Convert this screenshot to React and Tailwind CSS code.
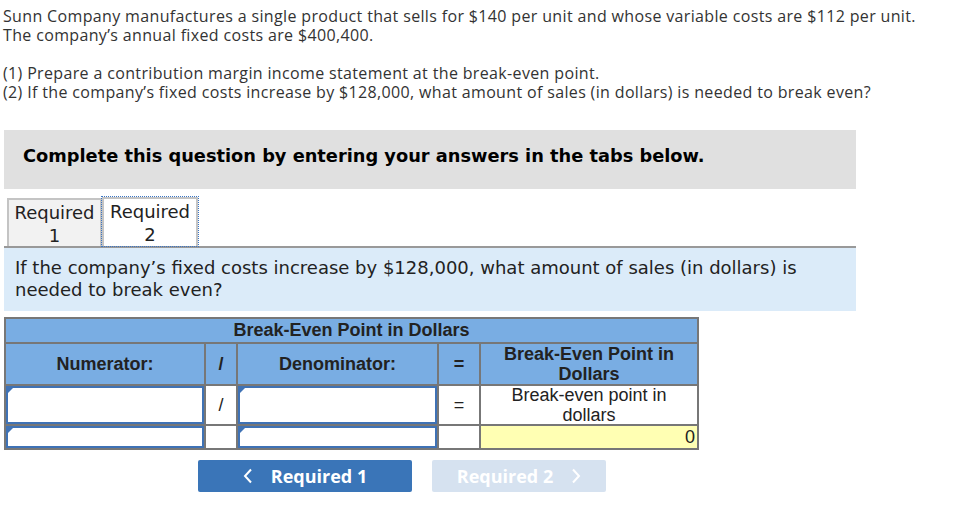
import React from 'react';

const proxima = { fontFamily: '"Open Sans", Lato, sans-serif' };
const verdana = { fontFamily: '"DejaVu Sans", Verdana, sans-serif' };

function InputBox() {
  return (
    <div className="relative h-full w-full bg-white border-2 border-[#3f72b5]">
      <span className="absolute left-0 top-0 w-0 h-0 border-t-[5px] border-r-[5px] border-t-[#3f72b5] border-r-transparent" />
    </div>
  );
}

export default function App() {
  return (
    <div className="w-[980px] h-[516px] bg-white text-[#222] overflow-hidden">
      <div className="pl-[3px] pt-[7px] text-[16px] leading-[19px] tracking-[0.35px] text-[#333]" style={proxima}>
        <p>Sunn Company manufactures a single product that sells for $140 per unit and whose variable costs are $112 per unit.</p>
        <p>The company’s annual fixed costs are $400,400.</p>
        <p className="mt-[19px]">(1) Prepare a contribution margin income statement at the break-even point.</p>
        <p>(2) If the company’s fixed costs increase by $128,000, what amount of sales (in dollars) is needed to break even?</p>
      </div>

      <div className="ml-[4px] mt-[28px] w-[852px] h-[59px] bg-[#e0e0e0] flex items-center pl-[19px] pb-[6px]">
        <span className="font-bold text-[17.8px] text-black" style={verdana}>
          Complete this question by entering your answers in the tabs below.
        </span>
      </div>

      <div className="ml-[4px] mt-[7px] w-[852px]" style={verdana}>
        <div className="flex items-end pl-[3px] h-[52px] border-b-2 border-[#999]">
          <div className="w-[95px] h-[48px] bg-[#f2f2f2] border-2 border-b-0 border-[#c4c4c4] text-center text-[18px] leading-[23px] pt-[1px] text-[#222]">
            Required<br />1
          </div>
          <div className="w-[96px] h-[49px] bg-white border-2 border-b-0 border-[#c4c4c4] outline-1 outline-dotted outline-[#3a75c4] text-center text-[18px] leading-[23px] pt-[1px] text-[#222]">
            Required<br />2
          </div>
        </div>
        <div className="bg-[#dbebf9] h-[63px] pl-[11px] pt-[9px] text-[18px] leading-[22px] text-[#222]">
          If the company’s fixed costs increase by $128,000, what amount of sales (in dollars) is<br />needed to break even?
        </div>
      </div>

      <div
        className="ml-[4px] mt-[6px] w-[695px] bg-[#777] p-[2px] grid gap-[2px] grid-cols-[198px_30px_199px_40px_216px] grid-rows-[23px_40px_38px_22px] text-[18px]"
        style={{ fontFamily: '"Liberation Sans", Arial, sans-serif' }}
      >
        <div className="col-span-5 bg-[#79ade3] font-bold text-[#222] flex items-center justify-center">Break-Even Point in Dollars</div>
        <div className="bg-[#79ade3] font-bold flex items-center justify-center">Numerator:</div>
        <div className="bg-[#79ade3] font-bold flex items-center justify-center">/</div>
        <div className="bg-[#79ade3] font-bold flex items-center justify-center">Denominator:</div>
        <div className="bg-[#79ade3] font-bold flex items-center justify-center">=</div>
        <div className="bg-[#79ade3] font-bold flex items-center justify-center text-center leading-[20px]">Break-Even Point in<br />Dollars</div>

        <div className="bg-white"><InputBox /></div>
        <div className="bg-white flex items-center justify-center">/</div>
        <div className="bg-white"><InputBox /></div>
        <div className="bg-white flex items-center justify-center">=</div>
        <div className="bg-white flex items-center justify-center text-center leading-[20px]">Break-even point in<br />dollars</div>

        <div className="bg-white"><InputBox /></div>
        <div className="bg-white" />
        <div className="bg-white"><InputBox /></div>
        <div className="bg-white" />
        <div className="bg-[#ffffb3] flex items-center justify-end pr-[2px]">0</div>
      </div>

      <div className="flex ml-[198px] mt-[10px] gap-[20px]" style={proxima}>
        <button className="w-[214px] h-[32px] rounded-[2px] bg-[#3a75b8] text-white font-bold text-[18px] flex items-center justify-center gap-[18px]">
          <svg width="10" height="16" viewBox="0 0 10 16" fill="none"><path d="M8 1.5 L2 8 L8 14.5" stroke="white" strokeWidth="2" /></svg>
          <span>Required 1</span>
        </button>
        <button className="w-[174px] h-[32px] rounded-[2px] bg-[#d6e2f0] text-white font-bold text-[18px] flex items-center justify-center gap-[18px]">
          <span>Required 2</span>
          <svg width="10" height="16" viewBox="0 0 10 16" fill="none"><path d="M2 1.5 L8 8 L2 14.5" stroke="white" strokeWidth="2" /></svg>
        </button>
      </div>
    </div>
  );
}
